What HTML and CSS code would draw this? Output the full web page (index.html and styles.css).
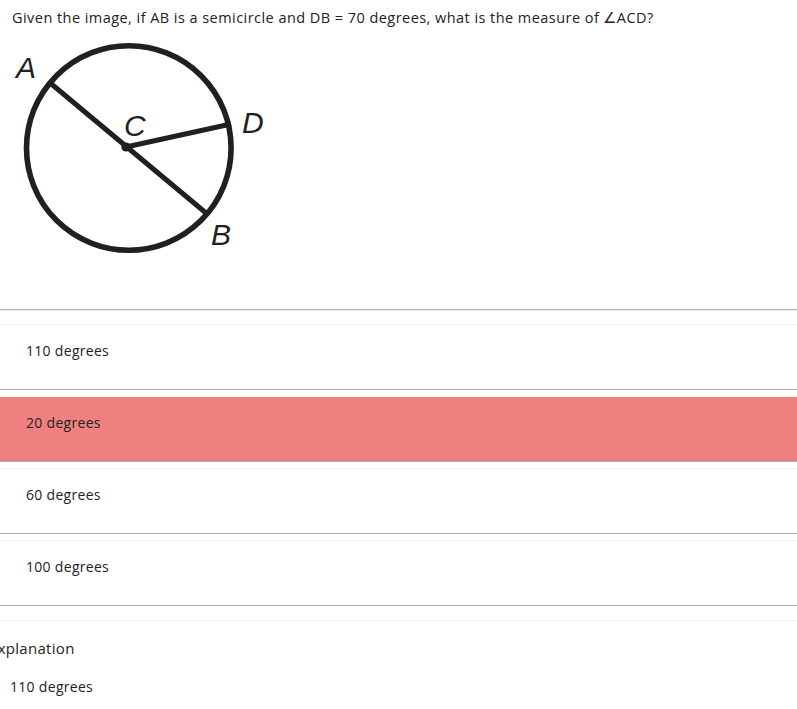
FILE: index.html
```html
<!DOCTYPE html>
<html lang="en">
<head>
<meta charset="utf-8">
<title>Question</title>
<link rel="stylesheet" href="styles.css">
</head>
<body>
<div class="question">
  <p class="prompt">Given the image, if AB is a semicircle and DB = 70 degrees, what is the measure of ∠ACD?</p>
  <div class="figure">
    <svg class="diagram" width="262" height="225" viewBox="12 38 262 225" xmlns="http://www.w3.org/2000/svg">
      <circle cx="128.8" cy="148" r="102.3" fill="none" stroke="#231f20" stroke-width="5.6"/>
      <line x1="49" y1="82" x2="206" y2="213" stroke="#231f20" stroke-width="5"/>
      <line x1="126" y1="147" x2="231" y2="124" stroke="#231f20" stroke-width="5"/>
      <circle cx="126" cy="147" r="4.6" fill="#231f20"/>
      <text class="lbl" x="16" y="78">A</text>
      <text class="lbl" x="124" y="136">C</text>
      <text class="lbl" x="242" y="133">D</text>
      <text class="lbl" x="211" y="245">B</text>
    </svg>
  </div>
</div>
<div class="options">
  <div class="option">110 degrees</div>
  <div class="option wrong">20 degrees</div>
  <div class="option">60 degrees</div>
  <div class="option">100 degrees</div>
</div>
<div class="explanation">
  <div class="exp-title">Explanation</div>
  <div class="exp-body">110 degrees</div>
</div>
</body>
</html>
```
FILE: styles.css
```css
html, body {
  margin: 0;
  padding: 0;
  background: #ffffff;
}
body {
  font-family: "Open Sans", "Liberation Sans", sans-serif;
  font-size: 14px;
  line-height: 20px;
  color: #222;
  overflow: hidden;
}
.question {
  padding: 8px 0 0 12px;
  height: 310px;
  box-sizing: border-box;
  border-bottom: 1px solid #b4b4b4;
  box-shadow: 0 1px 1px rgba(0, 0, 0, 0.08);
}
.prompt {
  margin: 0;
  height: 20px;
  font-size: 14.5px;
  letter-spacing: 0.45px;
  white-space: nowrap;
}
.figure {
  margin-top: 10px;
}
.diagram {
  display: block;
}
.lbl {
  font-family: "Liberation Sans", Arial, sans-serif;
  font-style: italic;
  font-size: 30px;
  fill: #231f20;
}
.options {
  margin-top: 14px;
}
.option {
  box-sizing: content-box;
  padding: 16px 0 0 26px;
  height: 48px;
  border-top: 1px solid #f3f3f3;
  border-bottom: 1px solid #acacac;
  margin-bottom: 6px;
  background-clip: padding-box;
  letter-spacing: 0.3px;
}
.option.wrong {
  background-color: #f08080;
  border-bottom-color: #a7aeb2;
}
.explanation {
  margin-top: 14px;
  border-top: 1px solid #f3f3f3;
  padding-top: 17px;
}
.exp-title {
  font-size: 15px;
  letter-spacing: 0.3px;
  margin-left: -11px;
}
.exp-body {
  margin-top: 19px;
  padding-left: 10px;
  letter-spacing: 0.3px;
}
```
